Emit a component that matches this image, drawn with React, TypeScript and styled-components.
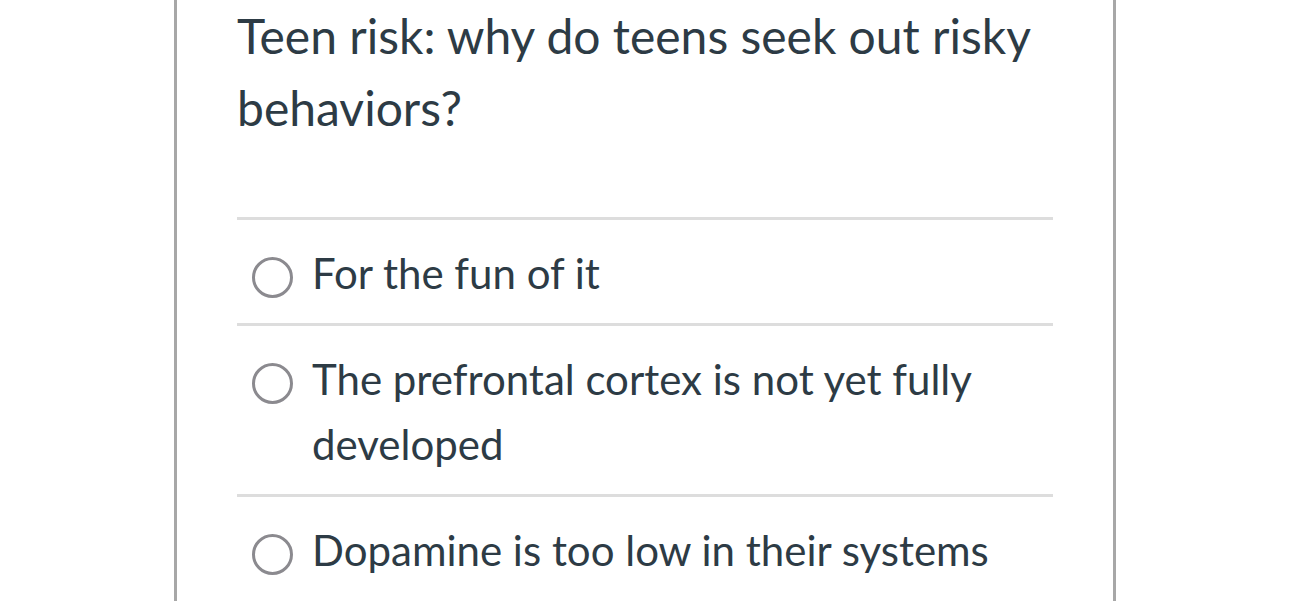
import React from "react";
import styled, { createGlobalStyle } from "styled-components";

const Global = createGlobalStyle`
  html, body { margin: 0; padding: 0; background: #ffffff; }
  body { font-family: Lato, "Open Sans", sans-serif; color: #2d3b45; }
`;

const Page = styled.div`
  display: flex;
  justify-content: center;
  min-height: 601px;
  overflow: hidden;
`;

const Card = styled.section`
  width: 942px;
  box-sizing: border-box;
  border-left: 3px solid #a7a7a7;
  border-right: 3px solid #a7a7a7;
  padding: 0 60px;
  min-height: 601px;
`;

const Title = styled.h2`
  margin: 0 0 73px 0;
  font-size: 48px;
  line-height: 72px;
  font-weight: 400;
  color: #2d3b45;
`;

const Options = styled.div`
  display: flex;
  flex-direction: column;
`;

const Option = styled.label`
  display: flex;
  align-items: flex-start;
  gap: 19px;
  padding: 21px 0 17px 15px;
  border-top: 3px solid #dddddd;
  cursor: pointer;
`;

const Radio = styled.span`
  flex: none;
  width: 41px;
  height: 41px;
  margin-top: 16px;
  box-sizing: border-box;
  border-radius: 50%;
  border: 3.5px solid #8b8a8f;
  background: #fff;
`;

const OptionText = styled.span`
  font-size: 42px;
  line-height: 65px;
  color: #2d3b45;
`;

const answers = [
  "For the fun of it",
  "The prefrontal cortex is not yet fully developed",
  "Dopamine is too low in their systems",
];

export default function App() {
  return (
    <>
      <Global />
      <Page>
        <Card>
          <Title>Teen risk: why do teens seek out risky behaviors?</Title>
          <Options>
            {answers.map((a) => (
              <Option key={a}>
                <Radio />
                <OptionText>{a}</OptionText>
              </Option>
            ))}
          </Options>
        </Card>
      </Page>
    </>
  );
}
